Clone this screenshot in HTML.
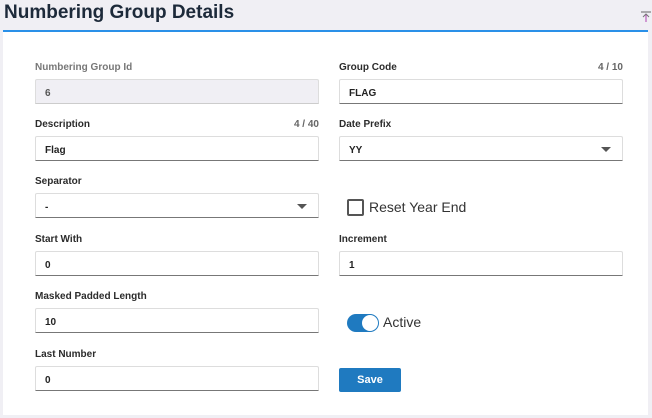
<!DOCTYPE html>
<html><head><style>
*{box-sizing:border-box;margin:0;padding:0}
body{width:652px;height:418px;background:#f0eff4;font-family:"Liberation Sans",sans-serif;position:relative;overflow:hidden}
.hdr{position:absolute;left:0;top:0;width:652px;height:30px;background:#f0eff4}
.hdr h1{position:absolute;left:4px;top:2px;font-size:19px;font-weight:bold;color:#1d2a3a}
.line{position:absolute;left:3px;top:30px;width:645px;height:2px;background:#2a90e8}
.card{position:absolute;left:3px;top:32px;width:645px;height:383px;background:#fff}
.lbl{position:absolute;font-size:10px;font-weight:bold;color:#2b2b2b}
.lbl.dim{color:#777}
.cnt{position:absolute;font-size:10px;font-weight:bold;color:#666;text-align:right}
.in{position:absolute;height:25px;background:#fff;border:1px solid #ddd;border-bottom:1px solid #777;border-radius:2px 2px 0 0;font-size:10px;font-weight:bold;color:#222;padding:8px 9px 0}
.in.dis{background:#f0eff4;color:#555;border-bottom-color:#ccc}
.arr{position:absolute;right:11px;top:10px;width:0;height:0;border-left:5px solid transparent;border-right:5px solid transparent;border-top:5px solid #555}
</style></head><body>
<div class="hdr"><h1>Numbering Group Details</h1>
<svg style="position:absolute;left:641px;top:11px" width="10" height="11"><line x1="0" y1="1" x2="10" y2="1" stroke="#666" stroke-width="1"/><line x1="5" y1="3" x2="5" y2="11" stroke="#b040b0" stroke-width="1"/><polyline points="2,6 5,3 8,6" fill="none" stroke="#777"/></svg></div>
<div class="line"></div>
<div class="card"></div>

<div class="lbl dim" style="left:35px;top:62px">Numbering Group Id</div>
<div class="in dis" style="left:35px;top:79px;width:284px">6</div>
<div class="lbl" style="left:339px;top:62px">Group Code</div>
<div class="cnt" style="left:560px;top:62px;width:63px">4 / 10</div>
<div class="in" style="left:339px;top:79px;width:284px">FLAG</div>

<div class="lbl" style="left:35px;top:119px">Description</div>
<div class="cnt" style="left:256px;top:119px;width:63px">4 / 40</div>
<div class="in" style="left:35px;top:136px;width:284px">Flag</div>
<div class="lbl" style="left:339px;top:119px">Date Prefix</div>
<div class="in" style="left:339px;top:136px;width:284px">YY<div class="arr"></div></div>

<div class="lbl" style="left:35px;top:176px">Separator</div>
<div class="in" style="left:35px;top:193px;width:284px">-<div class="arr"></div></div>
<div style="position:absolute;left:347px;top:199px;width:17px;height:17px;border:2px solid #555;border-radius:2px"></div>
<div style="position:absolute;left:369px;top:199px;font-size:14px;color:#333">Reset Year End</div>

<div class="lbl" style="left:35px;top:234px">Start With</div>
<div class="in" style="left:35px;top:251px;width:284px">0</div>
<div class="lbl" style="left:339px;top:234px">Increment</div>
<div class="in" style="left:339px;top:251px;width:284px">1</div>

<div class="lbl" style="left:35px;top:291px">Masked Padded Length</div>
<div class="in" style="left:35px;top:308px;width:284px">10</div>
<div style="position:absolute;left:347px;top:314px;width:32px;height:18px;border-radius:9px;background:#1f7ac0"></div>
<div style="position:absolute;left:362px;top:315px;width:16px;height:16px;border-radius:50%;background:#fff"></div>
<div style="position:absolute;left:383px;top:314px;font-size:14px;color:#333">Active</div>

<div class="lbl" style="left:35px;top:349px">Last Number</div>
<div class="in" style="left:35px;top:366px;width:284px">0</div>
<div style="position:absolute;left:339px;top:368px;width:62px;height:24px;background:#1f7ac0;border-radius:2px;color:#fff;font-size:11px;font-weight:bold;text-align:center;line-height:24px">Save</div>
</body></html>
